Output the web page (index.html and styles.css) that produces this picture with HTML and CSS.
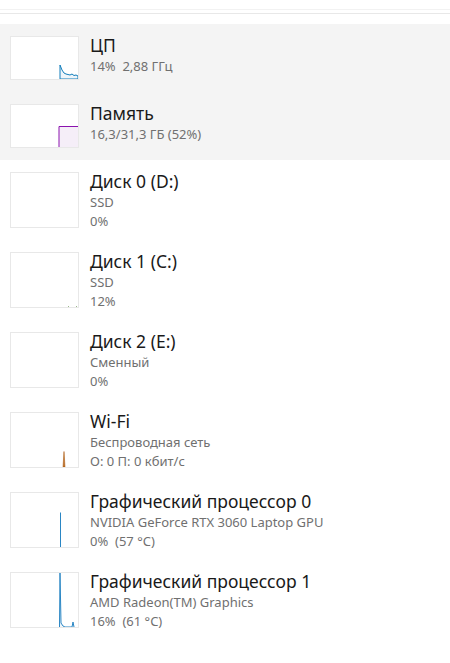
FILE: index.html
```html
<!DOCTYPE html>
<html lang="ru">
<head>
    <meta charset="UTF-8">
    <meta name="viewport" content="width=device-width, initial-scale=1.0">
    <title>Производительность</title>
    <link rel="stylesheet" href="styles.css">
</head>
<body>
    <div class="top-edge"><div class="edge-lines"></div></div>

    <ul class="perf-list">
        <li class="perf-item short selected">
            <div class="thumb">
                <svg viewBox="0 0 67 42" preserveAspectRatio="none">
                    <path class="cpu" d="M49,42 L49,28 L51,33 L53,36 L55,37 L57,37.5 L59,38 L61,37 L63,38.5 L65,38 L67,39 V42 Z"/>
                </svg>
            </div>
            <div class="info">
                <div class="name">ЦП</div>
                <div class="stat">14%&nbsp; 2,88 ГГц</div>
            </div>
        </li>

        <li class="perf-item short hover">
            <div class="thumb">
                <svg viewBox="0 0 67 42" preserveAspectRatio="none">
                    <path class="mem" d="M48,42.5 V21.5 H67.5 V42.5 Z"/>
                </svg>
            </div>
            <div class="info">
                <div class="name">Память</div>
                <div class="stat">16,3/31,3 ГБ (52%)</div>
            </div>
        </li>

        <li class="perf-item">
            <div class="thumb">
                <svg viewBox="0 0 67 54" preserveAspectRatio="none"></svg>
            </div>
            <div class="info">
                <div class="name">Диск 0 (D:)</div>
                <div class="stat">SSD</div>
                <div class="stat">0%</div>
            </div>
        </li>

        <li class="perf-item">
            <div class="thumb">
                <svg viewBox="0 0 67 54" preserveAspectRatio="none">
                    <path class="disk" d="M57,53.5 H58 M65,53.5 H66"/>
                </svg>
            </div>
            <div class="info">
                <div class="name">Диск 1 (C:)</div>
                <div class="stat">SSD</div>
                <div class="stat">12%</div>
            </div>
        </li>

        <li class="perf-item">
            <div class="thumb">
                <svg viewBox="0 0 67 54" preserveAspectRatio="none"></svg>
            </div>
            <div class="info">
                <div class="name">Диск 2 (E:)</div>
                <div class="stat">Сменный</div>
                <div class="stat">0%</div>
            </div>
        </li>

        <li class="perf-item">
            <div class="thumb">
                <svg viewBox="0 0 67 54" preserveAspectRatio="none">
                    <path class="net" d="M52,54 L53,38.5 L54,54 Z"/>
                </svg>
            </div>
            <div class="info">
                <div class="name">Wi-Fi</div>
                <div class="stat">Беспроводная сеть</div>
                <div class="stat">О: 0 П: 0 кбит/с</div>
            </div>
        </li>

        <li class="perf-item">
            <div class="thumb">
                <svg viewBox="0 0 67 54" preserveAspectRatio="none">
                    <path class="gpu" d="M49.5,54 V19.5"/>
                </svg>
            </div>
            <div class="info">
                <div class="name">Графический процессор 0</div>
                <div class="stat">NVIDIA GeForce RTX 3060 Laptop GPU</div>
                <div class="stat">0%&nbsp; (57 °C)</div>
            </div>
        </li>

        <li class="perf-item">
            <div class="thumb">
                <svg viewBox="0 0 67 54" preserveAspectRatio="none">
                    <path class="gpu fill" d="M48.5,54 L49,0 L50,50 L52,53 L54,54 L61,54 L62,49 L63,54"/>
                </svg>
            </div>
            <div class="info">
                <div class="name">Графический процессор 1</div>
                <div class="stat">AMD Radeon(TM) Graphics</div>
                <div class="stat">16%&nbsp; (61 °C)</div>
            </div>
        </li>
    </ul>
</body>
</html>
```

FILE: styles.css
```css
body {
    margin: 0;
    background-color: #fff;
    font-family: "Noto Sans", "Open Sans", sans-serif;
    color: #1a1a1a;
}

.top-edge {
    height: 24px;
    padding-top: 9px;
    box-sizing: border-box;
}

.edge-lines {
    height: 3px;
    border-top: 1px solid #f2f2f2;
    border-bottom: 1px solid #e8e8e8;
}

.perf-list {
    list-style: none;
    margin: 0;
    padding: 0;
}

.perf-item {
    display: flex;
    align-items: flex-start;
    height: 80px;
    padding: 12px 0 0 10px;
    box-sizing: border-box;
}

.perf-item.short {
    height: 68px;
}

.perf-item.selected,
.perf-item.hover {
    background-color: #f4f4f4;
}

.thumb {
    width: 69px;
    height: 56px;
    flex-shrink: 0;
    border: 1px solid #e8e8e8;
    background-color: #fff;
    box-sizing: border-box;
}

.short .thumb {
    height: 44px;
}

.thumb svg {
    display: block;
    width: 100%;
    height: 100%;
}

.cpu {
    fill: #eef5fa;
    stroke: #117dbb;
    stroke-width: 1;
}

.mem {
    fill: #f5eef8;
    stroke: #8b12ae;
    stroke-width: 1;
}

.disk {
    stroke: #9ab88a;
    stroke-width: 1;
}

.net {
    fill: #c07a36;
    stroke: #a74f01;
    stroke-width: 0.5;
}

.gpu {
    fill: none;
    stroke: #2a86c4;
    stroke-width: 1;
}

.gpu.fill {
    fill: #eef5fa;
}

.info {
    margin-left: 11px;
}

.name {
    font-size: 17.5px;
    line-height: 20px;
    margin: -1px 0 1.5px;
}

.stat {
    font-size: 13px;
    line-height: 19px;
    color: #707070;
}
```
